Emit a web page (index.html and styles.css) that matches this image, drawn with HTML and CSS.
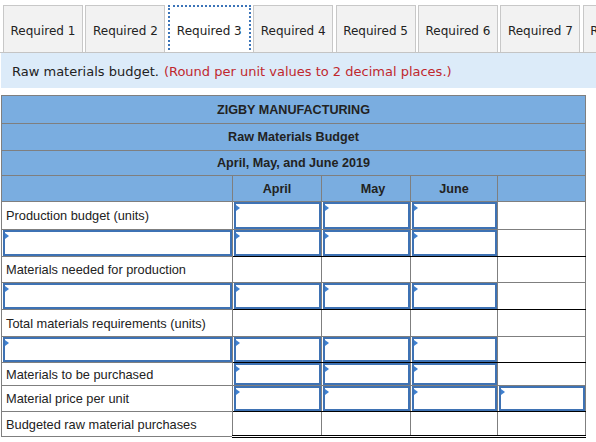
FILE: index.html
```html
<!DOCTYPE html>
<html>
<head>
<meta charset="utf-8">
<link rel="stylesheet" href="styles.css">
</head>
<body>
<div class="tabs">
  <div class="tab">Required 1</div>
  <div class="tab">Required 2</div>
  <div class="tab active">Required 3</div>
  <div class="tab">Required 4</div>
  <div class="tab">Required 5</div>
  <div class="tab">Required 6</div>
  <div class="tab">Required 7</div>
  <div class="tab">Required 8</div>
</div>
<div class="instr">Raw materials budget. <span class="red">(Round per unit values to 2 decimal places.)</span></div>
<div class="wrap">
<table class="budget">
  <colgroup>
    <col class="c-label"><col class="c-apr"><col class="c-may"><col class="c-jun"><col class="c-last">
  </colgroup>
  <tr class="h1"><th colspan="5">ZIGBY MANUFACTURING</th></tr>
  <tr class="h2"><th colspan="5">Raw Materials Budget</th></tr>
  <tr class="h3"><th colspan="5">April, May, and June 2019</th></tr>
  <tr class="h4"><th></th><th>April</th><th class="may">May</th><th>June</th><th></th></tr>

  <tr class="r28"><td class="lbl">Production budget (units)</td><td><div class="inp"></div></td><td><div class="inp"></div></td><td><div class="inp"></div></td><td></td></tr>
  <tr class="r27"><td class="lbl in"><div class="inp"></div></td><td class="bk"><div class="inp"></div></td><td class="bk"><div class="inp"></div></td><td class="bk"><div class="inp"></div></td><td class="bk"></td></tr>
  <tr class="r26"><td class="lbl">Materials needed for production</td><td></td><td></td><td></td><td></td></tr>
  <tr class="r27"><td class="lbl in"><div class="inp"></div></td><td class="bk"><div class="inp"></div></td><td class="bk"><div class="inp"></div></td><td class="bk"><div class="inp"></div></td><td class="bk"></td></tr>
  <tr class="r27"><td class="lbl">Total materials requirements (units)</td><td></td><td></td><td></td><td></td></tr>
  <tr class="r26"><td class="lbl in"><div class="inp"></div></td><td class="bk"><div class="inp"></div></td><td class="bk"><div class="inp"></div></td><td class="bk"><div class="inp"></div></td><td class="bk"></td></tr>
  <tr class="r23"><td class="lbl">Materials to be purchased</td><td><div class="inp"></div></td><td><div class="inp"></div></td><td><div class="inp"></div></td><td></td></tr>
  <tr class="r26"><td class="lbl">Material price per unit</td><td class="bk"><div class="inp"></div></td><td class="bk"><div class="inp"></div></td><td class="bk"><div class="inp"></div></td><td class="bk"><div class="inp"></div></td></tr>
  <tr class="r25"><td class="lbl">Budgeted raw material purchases</td><td class="dbl"></td><td class="dbl"></td><td class="dbl"></td><td class="dbl"></td></tr>
</table>
</div>
</body>
</html>
```
FILE: styles.css
```css
html, body {
  margin: 0;
  padding: 0;
  background: #fff;
}
body {
  width: 596px;
  height: 442px;
  overflow: hidden;
  font-family: "Liberation Sans", Arial, sans-serif;
  color: #222;
}
.tabs {
  display: flex;
  gap: 2.4px;
  padding: 5px 0 0 3px;
  border-bottom: 1px solid #c4c4c4;
  overflow: hidden;
  height: 47px;
}
.tab {
  flex: 0 0 auto;
  box-sizing: border-box;
  width: 80px;
  height: 47px;
  border: 1px solid #c8c8c8;
  border-bottom: none;
  background: #f2f2f2;
  font-family: "DejaVu Sans", Verdana, sans-serif;
  font-size: 12px;
  color: #222;
  display: flex;
  align-items: center;
  justify-content: center;
  padding-top: 4px;
  white-space: nowrap;
}
.tab.active {
  background: #fff;
  border: 2px dotted #3c74b8;
  height: 49px;
  width: 83px;
  padding-top: 2px;
  position: relative;
  z-index: 1;
}
.instr {
  background: #dcebf9;
  height: 35px;
  margin-left: 1px;
  padding-left: 11px;
  display: flex;
  align-items: center;
  padding-top: 2px;
  box-sizing: border-box;
  font-family: "DejaVu Sans", Verdana, sans-serif;
  font-size: 13px;
  color: #222;
  white-space: nowrap;
}
.red {
  color: #c0282e;
  margin-left: 5px;
}
.wrap {
  padding: 7px 0 0 1px;
}
.budget {
  border-collapse: collapse;
  width: 585px;
  table-layout: fixed;
  border: 1px solid #7f7f7f;
}
.c-label { width: 231px; }
.c-apr { width: 89px; }
.c-may { width: 89px; }
.c-jun { width: 87px; }
.c-last { width: 88px; }
.budget th {
  background: #7aade0;
  border: 1px solid #7f7f7f;
  font-size: 12.6px;
  font-weight: bold;
  color: #222;
  text-align: center;
  padding: 0;
}
.budget th.may {
  padding-left: 14px;
}
.budget td {
  border: 1px solid #7f7f7f;
  padding: 0;
  font-size: 12.8px;
  color: #222;
  vertical-align: middle;
  white-space: nowrap;
}
.h1 { height: 28px; }
.h2 { height: 27px; }
.h3 { height: 25px; }
.h4 { height: 26px; }
.r28 { height: 28px; }
.r27 { height: 27px; }
.r26 { height: 26px; }
.r25 { height: 25px; }
.r23 { height: 23px; }
.budget td.lbl {
  padding-left: 4px;
}
.budget td.lbl.in {
  padding-left: 0;
}
.budget td.bk {
  border-bottom: 1px solid #000;
}
.budget td.dbl {
  border-bottom: 3px double #000;
}
.inp {
  position: relative;
  box-sizing: border-box;
  margin: 0 0 0 1px;
  border: 2px solid #3e72b4;
  background: #fff;
}
tr.r28 .inp { height: 27px; }
tr.r27 .inp { height: 26px; }
tr.r26 .inp { height: 25px; }
tr.r25 .inp { height: 24px; }
tr.r23 .inp { height: 22px; }
.inp::before {
  content: "";
  position: absolute;
  left: 0;
  top: 1px;
  width: 0;
  height: 0;
  border-left: 4px solid #3f80cf;
  border-top: 3px solid transparent;
  border-bottom: 3px solid transparent;
}
```
